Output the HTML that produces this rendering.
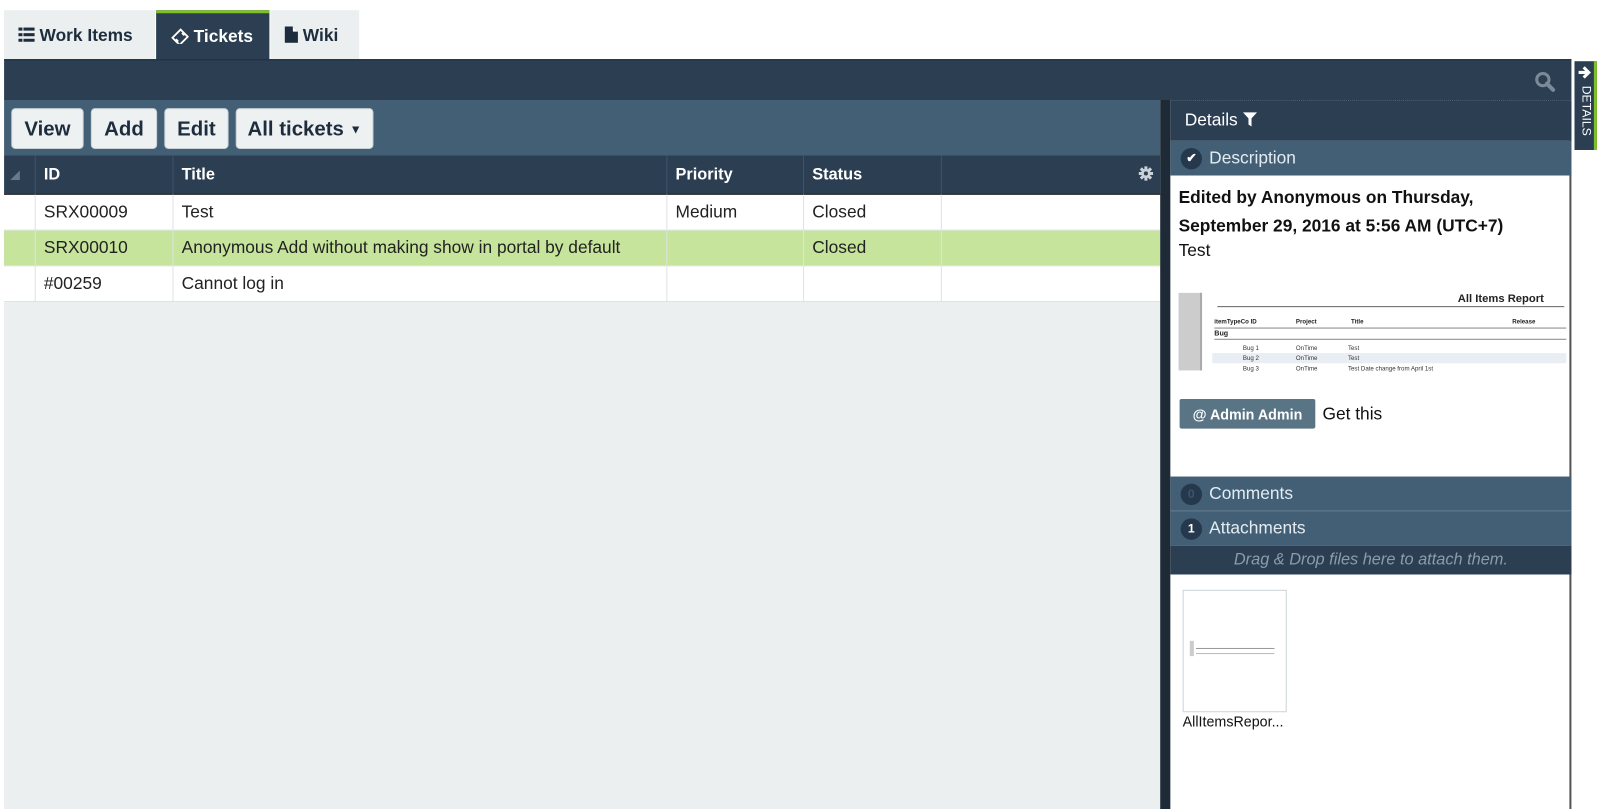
<!DOCTYPE html>
<html><head><style>
*{box-sizing:border-box;margin:0;padding:0}
body{width:1600px;height:793px;background:#fff;font-family:"Liberation Sans",sans-serif;overflow:hidden;color:#222}
#w{position:absolute;left:0;top:0;width:1568px;height:777px;transform:scale(1.02041);transform-origin:0 0}
.a{position:absolute}
.tab{position:absolute;top:10px;height:48px;background:#ebeff0;font-weight:bold;font-size:17px;color:#1e2d3d;line-height:50px;padding-left:14px}
.btn{position:absolute;top:106px;height:40px;background:#eef1f2;border-radius:4px;border:1px solid #c8d0d4;font-weight:bold;font-size:20px;color:#1e2d3d;line-height:40px;text-align:center}
.hd{position:absolute;top:152px;height:39px;color:#fff;font-weight:bold;font-size:16px;line-height:39px;padding-left:8px;border-left:1px solid #3d556b}
.row{position:absolute;left:4px;width:1133px;height:35px;border-bottom:1px solid #dde3e6;font-size:17px}
.row div{position:absolute;top:0;height:35px;line-height:34px;padding-left:8px;border-left:1px solid #dde3e6}
.sec{position:absolute;left:1147px;width:393px;color:#e4ecf1;font-size:17px;padding-left:38px}
.circ{position:absolute;left:10px;width:21px;height:21px;border-radius:50%;background:#26394c;color:#fff;font-size:12px;font-weight:bold;text-align:center;line-height:21px;padding:0}
</style></head><body><div id="w">
<div class="tab" style="left:4px;width:148px"><svg width="16" height="14" viewBox="0 0 16 14" style="vertical-align:-1px"><g fill="#1e2d3d"><rect x="0" y="0" width="4" height="3"/><rect x="5" y="0" width="11" height="3"/><rect x="0" y="5.5" width="4" height="3"/><rect x="5" y="5.5" width="11" height="3"/><rect x="0" y="11" width="4" height="3"/><rect x="5" y="11" width="11" height="3"/></g></svg> Work Items</div>
<div class="tab" style="left:153px;width:111px;background:#2b3e52;color:#fff;border-top:3px solid #7fbf2a;line-height:46px"><svg width="18" height="16" viewBox="0 0 18 16" style="vertical-align:-2px"><path d="M2 10L10 2l3 3-1 1 1 1 1-1 3 3-8 8-3-3 1-1-1-1-1 1z" fill="none" stroke="#fff" stroke-width="1.8"/></svg> Tickets</div>
<div class="tab" style="left:265px;width:87px"><svg width="13" height="16" viewBox="0 0 13 16" style="vertical-align:-2px"><path d="M0 0h8l5 5v11H0z" fill="#1e2d3d"/><path d="M8 0v5h5" fill="#fff"/></svg> Wiki</div>
<div class="a" style="left:4px;top:58px;width:1536px;height:40px;background:#2b3e52;border-top:1px solid #1a2634"></div>
<svg class="a" style="left:1503px;top:69px" width="22" height="22" viewBox="0 0 22 22"><circle cx="9" cy="9" r="6" stroke="#7a8a98" stroke-width="3" fill="none"/><path d="M13 13l6 6" stroke="#7a8a98" stroke-width="4" stroke-linecap="round"/></svg>
<div class="a" style="left:4px;top:98px;width:1133px;height:54px;background:#425f75"></div>
<div class="btn" style="left:11px;width:71px">View</div>
<div class="btn" style="left:89px;width:65px">Add</div>
<div class="btn" style="left:161px;width:63px">Edit</div>
<div class="btn" style="left:231px;width:135px">All tickets <span style="font-size:12px;vertical-align:2px">▼</span></div>
<div class="a" style="left:4px;top:152px;width:1133px;height:39px;background:#2b3e52;border-bottom:1px solid #111"></div>
<div class="a" style="left:10px;top:164px;color:#6b7a87;font-size:12px">◢</div>
<div class="hd" style="left:34px">ID</div><div class="hd" style="left:169px">Title</div><div class="hd" style="left:653px">Priority</div><div class="hd" style="left:787px">Status</div><div class="hd" style="left:922px;width:215px"></div>
<svg class="a" style="left:1115px;top:162px" width="16" height="16" viewBox="0 0 16 16"><g stroke="#c9d2d9" stroke-width="3"><path d="M8 1v14M1 8h14M3 3l10 10M13 3L3 13"/></g><circle cx="8" cy="8" r="4.5" fill="#c9d2d9"/><circle cx="8" cy="8" r="2" fill="#2b3e52"/></svg>
<div class="a" style="left:4px;top:191px;width:1133px;height:602px;background:#ebeff0"></div>
<div class="row" style="top:191px;background:#fff"><div style="left:0;width:30px;border:0"></div><div style="left:30px">SRX00009</div><div style="left:165px">Test</div><div style="left:649px">Medium</div><div style="left:783px">Closed</div><div style="left:918px;width:215px"></div></div>
<div class="row" style="top:226px;background:#c6e49b"><div style="left:0;width:30px;border:0"></div><div style="left:30px">SRX00010</div><div style="left:165px">Anonymous Add without making show in portal by default</div><div style="left:649px"></div><div style="left:783px">Closed</div><div style="left:918px;width:215px"></div></div>
<div class="row" style="top:261px;background:#fff"><div style="left:0;width:30px;border:0"></div><div style="left:30px">#00259</div><div style="left:165px">Cannot log in</div><div style="left:649px"></div><div style="left:783px"></div><div style="left:918px;width:215px"></div></div>
<div class="a" style="left:1137px;top:98px;width:10px;height:695px;background:#1e2a35"></div>
<div class="a" style="left:1147px;top:98px;width:393px;height:695px;background:#fff;border-right:2px solid #555"></div>
<div class="sec" style="top:98px;height:40px;background:#2b3e52;line-height:38px;padding-left:14px;color:#fff;font-size:17px;border-top:1px dotted #4a5f72">Details <svg width="14" height="14" viewBox="0 0 14 14" style="vertical-align:-1px"><path d="M0 0h14L8.5 6v8L5.5 12V6z" fill="#fff"/></svg></div>
<div class="sec" style="top:138px;height:34px;background:#425f75;line-height:34px"><span class="circ" style="top:7px">✔</span>Description</div>
<div class="a" style="left:1155px;top:180px;font-weight:bold;font-size:17px;line-height:28px;color:#111">Edited by Anonymous on Thursday,<br>September 29, 2016 at 5:56 AM (UTC+7)</div>
<div class="a" style="left:1155px;top:236px;font-size:17px;color:#111">Test</div>
<div class="a" style="left:1155px;top:287px;width:23px;height:76px;background:#ccc;border-right:2px solid #aaa"></div>
<div class="a" style="left:1193px;top:287px;width:340px;height:14px;border-bottom:1px solid #666;font-size:11px;font-weight:bold;text-align:right;padding-right:20px">All Items Report</div>
<div class="a" style="left:1190px;top:313px;width:345px;font-size:6px;font-weight:bold;border-bottom:1px solid #888;height:9px"><span style="position:absolute;left:0">itemTypeCo ID</span><span style="position:absolute;left:80px">Project</span><span style="position:absolute;left:134px">Title</span><span style="position:absolute;left:292px">Release</span></div>
<div class="a" style="left:1190px;top:324px;width:345px;font-size:7px;font-weight:bold;border-bottom:1px solid #888;height:9px">Bug</div>
<div class="a" style="left:1188px;top:346px;width:347px;height:10px;background:#e8eef4"></div>
<div class="a" style="left:1218px;top:337px;font-size:6px;color:#333;line-height:10px">Bug 1<br>Bug 2<br>Bug 3</div>
<div class="a" style="left:1270px;top:337px;font-size:6px;color:#333;line-height:10px">OnTime<br>OnTime<br>OnTime</div>
<div class="a" style="left:1321px;top:337px;font-size:6px;color:#333;line-height:10px">Test<br>Test<br>Test Date change from April 1st</div>
<div class="a" style="left:1156px;top:391px;width:133px;height:29px;background:#597585;border-radius:2px;color:#fff;font-weight:bold;font-size:14px;line-height:30px;text-align:center">@ Admin Admin</div>
<div class="a" style="left:1296px;top:396px;font-size:17px;color:#111">Get this</div>
<div class="sec" style="top:467px;height:34px;background:#425f75;line-height:34px;border-bottom:1px solid #5d7689"><span class="circ" style="top:7px;color:#3d5468">0</span>Comments</div>
<div class="sec" style="top:501px;height:34px;background:#425f75;line-height:34px"><span class="circ" style="top:7px">1</span>Attachments</div>
<div class="sec" style="top:535px;height:28px;background:#2b3e52;line-height:28px;padding:0;text-align:center;font-style:italic;font-size:16px;color:#8b9cab">Drag &amp; Drop files here to attach them.</div>
<div class="a" style="left:1159px;top:578px;width:102px;height:120px;border:1px solid #ccd5d8;background:#fff"></div>
<div class="a" style="left:1166px;top:628px;width:4px;height:15px;background:#ccc"></div>
<div class="a" style="left:1172px;top:635px;width:77px;height:1px;background:#999"></div>
<div class="a" style="left:1172px;top:640px;width:77px;height:1px;background:#bbb"></div>
<div class="a" style="left:1159px;top:699px;font-size:14px;color:#111">AllItemsRepor...</div>
<div class="a" style="left:1543px;top:60px;width:22px;height:87px;background:#2b3e52;border-right:3px solid #7fbf2a;color:#fff;font-size:12px">
<svg style="position:absolute;left:3px;top:4px" width="14" height="14" viewBox="0 0 14 14"><path d="M1 7h9M6 2l5 5-5 5" stroke="#fff" stroke-width="3" fill="none"/></svg>
<div style="position:absolute;left:19px;top:24px;transform:rotate(90deg);transform-origin:0 0;white-space:nowrap">DETAILS</div></div>
</div></body></html>
